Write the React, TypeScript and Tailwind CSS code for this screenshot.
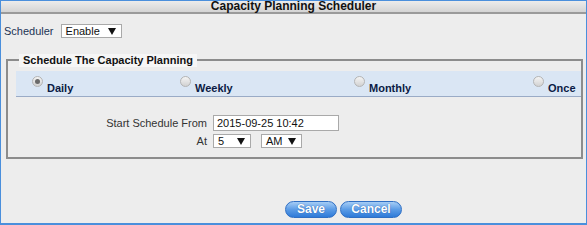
import { useState } from "react";

const font = { fontFamily: '"Liberation Sans", Arial, sans-serif' };

function Arrow() {
  return (
    <svg width="8" height="7" viewBox="0 0 8 7" className="shrink-0">
      <polygon points="0,0 8,0 4,7" fill="#111" />
    </svg>
  );
}

function FakeSelect({ value, width }: { value: string; width: string }) {
  return (
    <div
      className={`${width} h-[14px] bg-white border border-[#a9a9a9] flex items-center justify-between pl-[4px] pr-[5px] text-[11px] leading-none text-[#111]`}
    >
      <span>{value}</span>
      <Arrow />
    </div>
  );
}

function Radio({ checked }: { checked: boolean }) {
  return (
    <span className="w-[11px] h-[11px] rounded-full border border-[#b4b4b4] bg-gradient-to-b from-[#f4f4f4] to-[#d2d2d2] flex items-center justify-center shrink-0">
      {checked && <span className="w-[5px] h-[5px] rounded-full bg-[#6a6a6a]" />}
    </span>
  );
}

const options = [
  { label: "Daily", width: "w-[148px]" },
  { label: "Weekly", width: "w-[174px]" },
  { label: "Monthly", width: "w-[179px]" },
  { label: "Once", width: "flex-1" },
];

export default function App() {
  const [freq, setFreq] = useState("Daily");

  return (
    <div
      style={font}
      className="w-[587px] h-[225px] bg-[#ededed] border border-t-0 border-b-2 border-[#4a8fdc] flex flex-col overflow-hidden"
    >
      <div className="h-[14px] border-t border-[#4a8fdc] bg-gradient-to-b from-[#ececec] to-[#d4d4d4] border-b-2 border-b-[#9a9a9a] text-center text-[12px] leading-[11px] font-bold text-[#111]">
        Capacity Planning Scheduler
      </div>

      <div className="flex items-center mt-[9px] pl-[3px] gap-[7px]">
        <span className="text-[11px] text-[#1c3455]">Scheduler</span>
        <FakeSelect value="Enable" width="w-[61px]" />
      </div>

      <fieldset className="mt-[14px] ml-[5px] mr-[3px] border-2 border-[#8c8c8c] pl-[8px] pt-[4px] pb-[7px]">
        <legend className="ml-[3px] px-[4px] bg-[#f6f6f6] text-[11px] leading-[13px] font-bold text-[#111]">
          Schedule The Capacity Planning
        </legend>

        <div className="h-[26px] bg-[#dae6f4] border-b border-[#9aabc6] flex">
          {options.map((o) => (
            <div
              key={o.label}
              className={`${o.width} pl-[16px] flex items-start pt-[5px] gap-[4px] cursor-pointer`}
              onClick={() => setFreq(o.label)}
            >
              <Radio checked={freq === o.label} />
              <span className="text-[11px] font-bold text-[#0b1b45] mt-[6px] leading-[12px]">
                {o.label}
              </span>
            </div>
          ))}
        </div>

        <div className="mt-[18px] flex flex-col gap-[2px]">
          <div className="flex items-center">
            <span className="w-[191px] text-right text-[11px] text-[#333]">
              Start Schedule From
            </span>
            <div className="ml-[6px] w-[126px] h-[16px] bg-white border border-[#a9a9a9] text-[11px] leading-[14px] pl-[3px] text-[#111]">
              2015-09-25 10:42
            </div>
          </div>
          <div className="flex items-center">
            <span className="w-[191px] text-right text-[11px] text-[#333]">At</span>
            <div className="ml-[6px] flex gap-[10px]">
              <FakeSelect value="5" width="w-[38px]" />
              <FakeSelect value="AM" width="w-[41px]" />
            </div>
          </div>
        </div>
      </fieldset>

      <div className="mt-[42px] pl-[284px] flex gap-[3px]">
        <button className="w-[52px] h-[17px] rounded-full border border-[#2f6fc4] bg-gradient-to-b from-[#a6cdf5] via-[#5b9ce6] to-[#2d7ad8] text-white text-[12px] font-bold leading-none [text-shadow:0_0_1px_#1e4f9a]">
          Save
        </button>
        <button className="w-[62px] h-[17px] rounded-full border border-[#2f6fc4] bg-gradient-to-b from-[#a6cdf5] via-[#5b9ce6] to-[#2d7ad8] text-white text-[12px] font-bold leading-none [text-shadow:0_0_1px_#1e4f9a]">
          Cancel
        </button>
      </div>
    </div>
  );
}
